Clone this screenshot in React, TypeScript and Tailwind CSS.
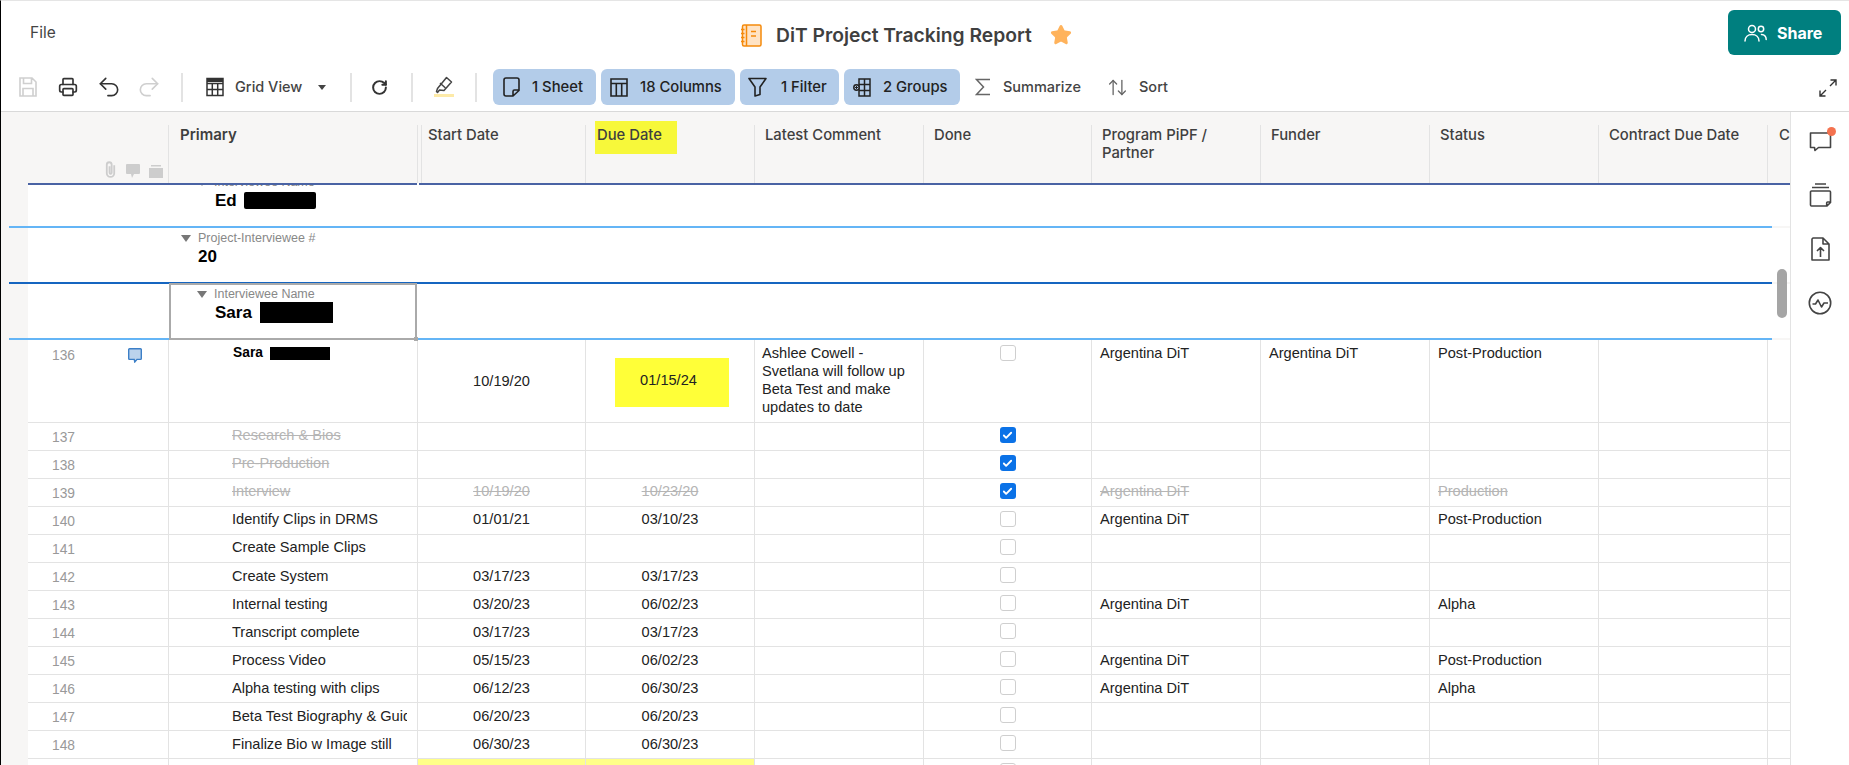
import React from 'react';
import { Printer, Undo2, Redo2, RotateCw, Star, ArrowUpDown, Check } from 'lucide-react';

const BODY_COLS = 'grid grid-cols-[141px_249px_168px_169px_169px_168px_169px_169px_169px_169px_4px]';
const HEAD_COLS = 'grid grid-cols-[168px_249px_168px_169px_169px_168px_169px_169px_169px_169px_22px]';

type RowData = {
  n: number;
  name: string;
  start?: string;
  due?: string;
  done?: boolean;
  partner?: string;
  status?: string;
  strike?: boolean;
};

const ROWS: RowData[] = [
  { n: 137, name: 'Research & Bios', done: true, strike: true },
  { n: 138, name: 'Pre-Production', done: true, strike: true },
  { n: 139, name: 'Interview', start: '10/19/20', due: '10/23/20', done: true, partner: 'Argentina DiT', status: 'Production', strike: true },
  { n: 140, name: 'Identify Clips in DRMS', start: '01/01/21', due: '03/10/23', partner: 'Argentina DiT', status: 'Post-Production' },
  { n: 141, name: 'Create Sample Clips' },
  { n: 142, name: 'Create System', start: '03/17/23', due: '03/17/23' },
  { n: 143, name: 'Internal testing', start: '03/20/23', due: '06/02/23', partner: 'Argentina DiT', status: 'Alpha' },
  { n: 144, name: 'Transcript complete', start: '03/17/23', due: '03/17/23' },
  { n: 145, name: 'Process Video', start: '05/15/23', due: '06/02/23', partner: 'Argentina DiT', status: 'Post-Production' },
  { n: 146, name: 'Alpha testing with clips', start: '06/12/23', due: '06/30/23', partner: 'Argentina DiT', status: 'Alpha' },
  { n: 147, name: 'Beta Test Biography & Guide', start: '06/20/23', due: '06/20/23' },
  { n: 148, name: 'Finalize Bio w Image still', start: '06/30/23', due: '06/30/23' },
];

const Sep = ({ ml }: { ml: string }) => <div className={`h-[29px] w-[2px] bg-[#e3e3e3] ${ml}`} />;

const Pill = ({ icon, label, className }: { icon: React.ReactNode; label: string; className: string }) => (
  <div className={`flex h-9 items-center rounded-md bg-[#b3cce9] text-[14.8px] font-medium text-[#222] ${className}`}>
    {icon}
    <span>{label}</span>
  </div>
);

const Triangle = () => (
  <svg width="10" height="7" viewBox="0 0 10 7" className="shrink-0">
    <path d="M0 0h10L5 7z" fill="#777" />
  </svg>
);

const Box = ({ done }: { done?: boolean }) =>
  done ? (
    <div className="flex h-4 w-4 items-center justify-center rounded-[3px] bg-[#0b72e7]">
      <Check className="h-[11px] w-[11px] text-white" strokeWidth={4} />
    </div>
  ) : (
    <div className="h-4 w-4 rounded-[3px] border border-[#cfcfcf] bg-white" />
  );

const BubbleIcon = () => (
  <svg width="14" height="15" viewBox="0 0 14 15">
    <path d="M1.5.8h11a.8.8 0 0 1 .8.8v9a.8.8 0 0 1-.8.8H9L6.8 14l-.6-2.6H1.500a.8.8 0 0 1-.8-.8v-9a.8.8 0 0 1 .8-.8z" fill="#bcd3ec" stroke="#3c7fc7" strokeWidth="1.400" />
  </svg>
);

const GroupRow = ({ label, deep, children, className }: { label: string; deep?: boolean; children: React.ReactNode; className?: string }) => (
  <div className={`${deep ? 'pl-[169px]' : 'pl-[153px]'} ${className ?? ''}`}>
    <div className={`flex h-[20px] items-center ${deep ? 'pt-[1px]' : ''}`}>
      <Triangle />
      <span className="ml-[7px] text-[12.5px] leading-none text-[#888]">{label}</span>
    </div>
    <div className={`flex h-[17px] items-center text-[17px] font-bold text-black ${deep ? 'ml-[18px]' : 'ml-[17px]'}`}>{children}</div>
  </div>
);

const TaskRow = ({ row }: { row: RowData }) => {
  const strike = row.strike ? 'text-[#b5b5b5] line-through' : 'text-[#222]';
  const nudge = row.n < 142 ? 'pb-[1px]' : '';
  return (
    <div className={`${BODY_COLS} h-[28px] border-b border-[#e3e3e3] text-[14.6px]`}>
      <div className="border-r border-[#e3e3e3] pt-[6px]">
        <div className="w-[47px] text-right text-[13.8px] leading-[18px] text-[#999]">{row.n}</div>
      </div>
      <div className={`flex items-center overflow-hidden whitespace-nowrap border-r border-[#e3e3e3] pl-[63px] ${nudge} ${strike}`}>
        <span className="w-[175px] overflow-hidden">{row.name}</span>
      </div>
      <div className={`flex items-center justify-center border-r border-[#e3e3e3] ${nudge} ${strike}`}>{row.start}</div>
      <div className={`flex items-center justify-center border-r border-[#e3e3e3] ${nudge} ${strike}`}>{row.due}</div>
      <div className="border-r border-[#e3e3e3]" />
      <div className="flex justify-center border-r border-[#e3e3e3] pt-[4px]">
        <Box done={row.done} />
      </div>
      <div className={`flex items-center border-r border-[#e3e3e3] pl-2 ${nudge} ${strike}`}>{row.partner}</div>
      <div className="border-r border-[#e3e3e3]" />
      <div className={`flex items-center border-r border-[#e3e3e3] pl-2 ${nudge} ${strike}`}>{row.status}</div>
      <div className="border-r border-[#e3e3e3]" />
      <div />
    </div>
  );
};

const HEADERS = ['Latest Comment', 'Done', 'Program PiPF / Partner', 'Funder', 'Status', 'Contract Due Date'];

export default function App() {
  return (
    <div className="flex h-screen w-full flex-col overflow-hidden border-l border-t border-l-black border-t-[#e5e5e5] bg-white font-['Inter',sans-serif] text-[#333]">
      {/* title bar */}
      <div className="relative flex h-[68px] shrink-0 items-start">
        <div className="ml-[29px] mt-[22px] w-[24px] text-[15.5px] leading-[20px] text-[#444]">File</div>
        <div className="ml-[686px] mt-[22px] flex items-center">
          <svg width="22" height="23" viewBox="0 0 22 23">
            <rect x="2.500" y="1" width="18.500" height="21" rx="1.500" fill="#ffe3c4" stroke="#f58a0b" strokeWidth="1.500" />
            <path d="M6.500 1v21M1 5.500h3.500M1 9.500h3.500M1 13.500h3.500M1 17.500h3.500M11 7.500h5M11 12h5" stroke="#f58a0b" strokeWidth="1.500" fill="none" />
          </svg>
          <span className="ml-[14px] w-[257px] whitespace-nowrap text-[19.3px] font-semibold leading-[24px] text-[#3f3f3f]">DiT Project Tracking Report</span>
          <Star className="ml-[17px] h-[22px] w-[22px] fill-[#ffb35c] text-[#ffb35c]" />
        </div>
        <div className="ml-auto mr-[8px] mt-[9px] flex h-[45px] w-[113px] items-center rounded-md bg-[#007f7f] pl-[16px] text-[16px] font-bold text-white">
          <svg width="23" height="18" viewBox="0 0 23 18" fill="none" stroke="white" strokeWidth="1.500" strokeLinecap="round">
            <circle cx="8" cy="5" r="3.500" />
            <circle cx="17" cy="5" r="2.700" />
            <path d="M1 17c0-4 3-6.500 7-6.500s7 2.500 7 6.500M17.500 10.500c2.800.2 4.700 2.300 4.700 5" />
          </svg>
          <span className="ml-[10px]">Share</span>
        </div>
      </div>

      {/* toolbar */}
      <div className="flex h-[43px] shrink-0 items-start border-b border-[#d9d9d9]">
        <div className="flex h-9 items-center text-[14.5px] font-medium text-[#444]">
          <svg width="18" height="20" viewBox="0 0 18 20" fill="none" stroke="#cfcfcf" strokeWidth="1.600" className="ml-[18px]">
            <path d="M1 1h12l4 4v14H1zM4.500 1v5.500h8V1M4 19v-7.500h10V19" />
          </svg>
          <Printer className="ml-[21px] h-[20px] w-[20px] text-[#333]" strokeWidth={2} />
          <Undo2 className="ml-[18px] h-[26px] w-[26px] text-[#333]" strokeWidth={1.500} />
          <Redo2 className="ml-[14px] h-[26px] w-[26px] text-[#cfcfcf]" strokeWidth={1.500} />
          <Sep ml="ml-[19px]" />
          <svg width="18" height="20" viewBox="0 0 18 20" fill="none" stroke="#333" strokeWidth="1.500" className="ml-[23px]">
            <path d="M1 1.500h16v17H1zM1 6.500h16M1 12.500h16M6.300 6.500v12M11.700 6.500v12" />
            <path d="M1 3.500h16" strokeWidth="3" />
          </svg>
          <span className="ml-[11px] w-[68px] whitespace-nowrap">Grid View</span>
          <svg width="8" height="5" viewBox="0 0 8 5" className="ml-[15px]">
            <path d="M0 0h8L4 5z" fill="#444" />
          </svg>
          <Sep ml="ml-[24px]" />
          <RotateCw className="ml-[19px] h-[17px] w-[17px] text-[#333]" strokeWidth={2.800} />
          <Sep ml="ml-[23px]" />
          <svg width="20" height="22" viewBox="0 0 20 22" fill="none" className="ml-[21px]">
            <path d="M12.500 1.500l5 4.500-7.500 8.500-4.500-.5-2 2.500-1-1 1-3z" stroke="#444" strokeWidth="1.500" strokeLinejoin="round" />
            <path d="M6 7l5.500 5" stroke="#444" strokeWidth="1.500" />
            <rect x="0" y="18" width="20" height="3" fill="#fdeaa8" />
          </svg>
          <Sep ml="ml-[21px]" />
          <Pill
            className="ml-[16px] w-[103px] pl-[10px]"
            label="1 Sheet"
            icon={
              <svg width="17" height="20" viewBox="0 0 17 20" fill="none" stroke="#222" strokeWidth="1.600" className="mr-[12px]">
                <path d="M3 1h11a2 2 0 0 1 2 2v10.500L10 19H3a2 2 0 0 1-2-2V3a2 2 0 0 1 2-2zM16 13h-4.500a1.500 1.500 0 0 0-1.500 1.500V19" />
              </svg>
            }
          />
          <Pill
            className="ml-[5px] w-[134px] pl-[9px]"
            label="18 Columns"
            icon={
              <svg width="18" height="19" viewBox="0 0 18 19" fill="none" stroke="#222" strokeWidth="1.600" className="mr-[12px]">
                <path d="M1 1h16v17H1zM1 5.500h16M6.300 5.500V18M11.700 5.500V18" />
              </svg>
            }
          />
          <Pill
            className="ml-[5px] w-[99px] pl-[8px]"
            label="1 Filter"
            icon={
              <svg width="19" height="20" viewBox="0 0 19 20" fill="none" stroke="#222" strokeWidth="1.600" strokeLinejoin="round" className="mr-[14px]">
                <path d="M1 1.500h17l-6 8.500v7.500l-5 1.500v-9z" />
              </svg>
            }
          />
          <Pill
            className="ml-[5px] w-[116px] pl-[9px]"
            label="2 Groups"
            icon={
              <svg width="18" height="19" viewBox="0 0 18 19" fill="none" stroke="#222" strokeWidth="1.500" className="mr-[12px]">
                <path d="M6 1h11v17H6zM11.500 1v17M6 6.500h11M6 12.500h11" />
                <circle cx="3.500" cy="9.500" r="2.700" fill="#b3cce9" />
                <path d="M2 9.500h3M3.500 8v3" strokeWidth="1" />
              </svg>
            }
          />
          <svg width="16" height="18" viewBox="0 0 16 18" fill="none" stroke="#666" strokeWidth="1.500" className="ml-[15px]">
            <path d="M15 1.500H1.500L8.500 9l-7 7.500H15" />
          </svg>
          <span className="ml-[12px] w-[79px]">Summarize</span>
          <ArrowUpDown className="ml-[25px] h-[21px] w-[21px] text-[#666]" strokeWidth={1.500} />
          <span className="ml-[11px] text-[#444]">Sort</span>
        </div>
        <svg width="18" height="18" viewBox="0 0 18 18" fill="none" stroke="#333" strokeWidth="1.400" className="ml-auto mr-[12px] mt-[10px]">
          <path d="M11 7l6-6M11.500 1H17v5.500M7 11l-6 6M1 11.500V17h5.500" />
        </svg>
      </div>

      <div className="flex min-h-0 flex-1">
        {/* grid */}
        <div className="relative w-[1789px] shrink-0 overflow-hidden bg-[#f7f6f5]">
          <div className={`${HEAD_COLS} h-[71px] items-end text-[14.8px] font-medium leading-[18px] text-[#3f3f3f]`}>
            <div className="flex h-[58px] items-end justify-end gap-[9px] border-r border-[#e3e3e3] pb-[5px] pr-[5px]">
              <svg width="13" height="17" viewBox="0 0 12 16" fill="none" stroke="#cdcdcd" strokeWidth="1.700">
                <path d="M9.500 4v7.500a3.500 3.500 0 0 1-7 0V3.500a2.300 2.300 0 0 1 4.600 0V11a1 1 0 0 1-2 0V5" />
              </svg>
              <svg width="14" height="14" viewBox="0 0 14 14">
                <path d="M1 0h12a1 1 0 0 1 1 1v8a1 1 0 0 1-1 1H8l-2 4-1-4H1a1 1 0 0 1-1-1V1a1 1 0 0 1 1-1z" fill="#cdcdcd" />
              </svg>
              <svg width="14" height="13" viewBox="0 0 14 13">
                <path d="M2 0h10v1.500H2zM0 3h14v10H0z" fill="#cdcdcd" />
              </svg>
            </div>
            <div className="h-[58px] border-r border-[#e3e3e3] pl-[11px] pt-[1px] text-[15px] font-semibold">Primary</div>
            <div className="ml-[3px] h-[58px] border-l border-r border-[#e3e3e3] pl-[6px] pt-[1px]">Start Date</div>
            <div className="h-[58px] border-r border-[#e3e3e3]">
              <div className="-mt-[4px] ml-[9px] h-[33px] w-[82px] bg-[#f7f83a] pl-[2px] pt-[5px]">Due Date</div>
            </div>
            {HEADERS.map((h) => (
              <div key={h} className="h-[58px] border-r border-[#e3e3e3] pl-[10px] pr-[8px] pt-[1px]">
                {h}
              </div>
            ))}
            <div className="h-[58px] overflow-hidden pl-[11px] pt-[1px]">C</div>
          </div>
          <div className="relative ml-[27px] h-[2px] bg-[#4a63a4]">
            <div className="absolute left-[389px] top-0 h-[2px] w-[2px] bg-white" />
          </div>

          <div className="font-['Liberation_Sans',sans-serif]">
            <div className="ml-[27px] h-[41px] overflow-hidden bg-white">
              <GroupRow label="Interviewee Name" deep className="-mt-[13px]">
                Ed<span className="ml-[7px] h-[17px] w-[72px] rounded-[2px] bg-black" />
              </GroupRow>
            </div>
            <div className="ml-[8px] h-[2px] w-[1763px] bg-[#64b5f6]" />
            <div className="ml-[27px] h-[54px] bg-white">
              <GroupRow label="Project-Interviewee #">20</GroupRow>
            </div>
            <div className="ml-[8px] h-[2px] w-[1763px] bg-[#1565c0]" />
            <div className="relative ml-[27px] h-[54px] bg-white">
              <GroupRow label="Interviewee Name" deep>
                Sara<span className="ml-[8px] h-[21px] w-[73px] bg-black" />
              </GroupRow>
              <div className="absolute left-[141px] top-[-1px] h-[57px] w-[248px] border-2 border-[#aaa]">
                <div className="absolute bottom-[-3px] right-[-3px] h-[4px] w-[4px] bg-[#aaa]" />
              </div>
            </div>
            <div className="ml-[8px] h-[2px] w-[1763px] bg-[#64b5f6]" />

            <div className="ml-[27px] bg-white">
              <div className={`${BODY_COLS} h-[83px] border-b border-[#e3e3e3] text-[14.6px] leading-[18px] text-[#222]`}>
                <div className="flex border-r border-[#e3e3e3] pt-[7px]">
                  <div className="w-[47px] text-right text-[13.8px] text-[#999]">136</div>
                  <div className="ml-[53px] mt-[1px]">
                    <BubbleIcon />
                  </div>
                </div>
                <div className="border-r border-[#e3e3e3] pl-[64px] pt-[6px]">
                  <div className="flex h-[14px] items-center text-[13.8px] font-bold text-black">
                    Sara<span className="ml-[7px] h-[13px] w-[60px] bg-black" />
                  </div>
                </div>
                <div className="flex items-center justify-center border-r border-[#e3e3e3]">10/19/20</div>
                <div className="border-r border-[#e3e3e3] pl-[29px] pt-[18px]">
                  <div className="flex h-[49px] w-[114px] items-center justify-center bg-[#ffff38] pb-[6px] pr-[7px]">01/15/24</div>
                </div>
                <div className="border-r border-[#e3e3e3] pl-[7px] pt-[4px]">
                  Ashlee Cowell - Svetlana will follow up Beta Test and make updates to date
                </div>
                <div className="flex justify-center border-r border-[#e3e3e3] pt-[5px]">
                  <Box />
                </div>
                <div className="border-r border-[#e3e3e3] pl-2 pt-[4px]">Argentina DiT</div>
                <div className="border-r border-[#e3e3e3] pl-2 pt-[4px]">Argentina DiT</div>
                <div className="border-r border-[#e3e3e3] pl-2 pt-[4px]">Post-Production</div>
                <div className="border-r border-[#e3e3e3]" />
                <div />
              </div>
              {ROWS.map((row) => (
                <TaskRow key={row.n} row={row} />
              ))}
              <div className={`${BODY_COLS} h-[28px]`}>
                <div className="border-r border-[#e3e3e3]" />
                <div className="border-r border-[#e3e3e3]" />
                <div className="border-r border-[#e3e3e3] bg-[#ffff88]" />
                <div className="border-r border-[#e3e3e3] bg-[#ffff88]" />
                <div className="border-r border-[#e3e3e3]" />
                <div className="flex justify-center border-r border-[#e3e3e3] pt-[4px]">
                  <Box />
                </div>
                <div className="border-r border-[#e3e3e3]" />
                <div className="border-r border-[#e3e3e3]" />
                <div className="border-r border-[#e3e3e3]" />
                <div className="border-r border-[#e3e3e3]" />
                <div />
              </div>
            </div>
          </div>

          {/* scrollbar thumb */}
          <div className="absolute left-[1776px] top-[157px] h-[49px] w-[10px] rounded-full bg-[#a5a5a5]" />
        </div>

        {/* right rail */}
        <div className="flex flex-1 flex-col items-center border-l border-[#e3e3e3] pt-[20px]">
          <div className="relative h-[20px] w-[23px]">
            <svg width="23" height="20" viewBox="0 0 23 20" fill="none" stroke="#444" strokeWidth="1.600">
              <path d="M1.500 1h20v14.500H9.500L6 18.500l-.5-3h-4z" strokeLinejoin="round" />
            </svg>
            <div className="absolute right-[-4px] top-[-5px] h-[9px] w-[9px] rounded-full bg-[#f4724f]" />
          </div>
          <svg width="23" height="24" viewBox="0 0 23 24" fill="none" stroke="#444" strokeWidth="1.600" className="mt-[31px]">
            <path d="M6 1h11M3 4.500h17M2.500 8h18a1 1 0 0 1 1 1v10.500L18 23H2.500a1 1 0 0 1-1-1V9a1 1 0 0 1 1-1zM21.500 19h-3a.8.8 0 0 0-.8.8V23" />
          </svg>
          <svg width="19" height="24" viewBox="0 0 19 24" fill="none" stroke="#444" strokeWidth="1.600" className="mt-[30px]">
            <path d="M2 1h10l6 6v16H1V2zM12 1v6h6M9.500 20v-9M6 14l3.500-3.500L13 14" strokeLinejoin="round" />
          </svg>
          <svg width="24" height="24" viewBox="0 0 24 24" fill="none" stroke="#444" strokeWidth="1.600" className="mt-[30px]">
            <circle cx="12" cy="12" r="10.700" />
            <path d="M4.500 13h3l2.500-4 3.500 7 2.500-4h4" strokeLinejoin="round" />
          </svg>
        </div>
      </div>
    </div>
  );
}
